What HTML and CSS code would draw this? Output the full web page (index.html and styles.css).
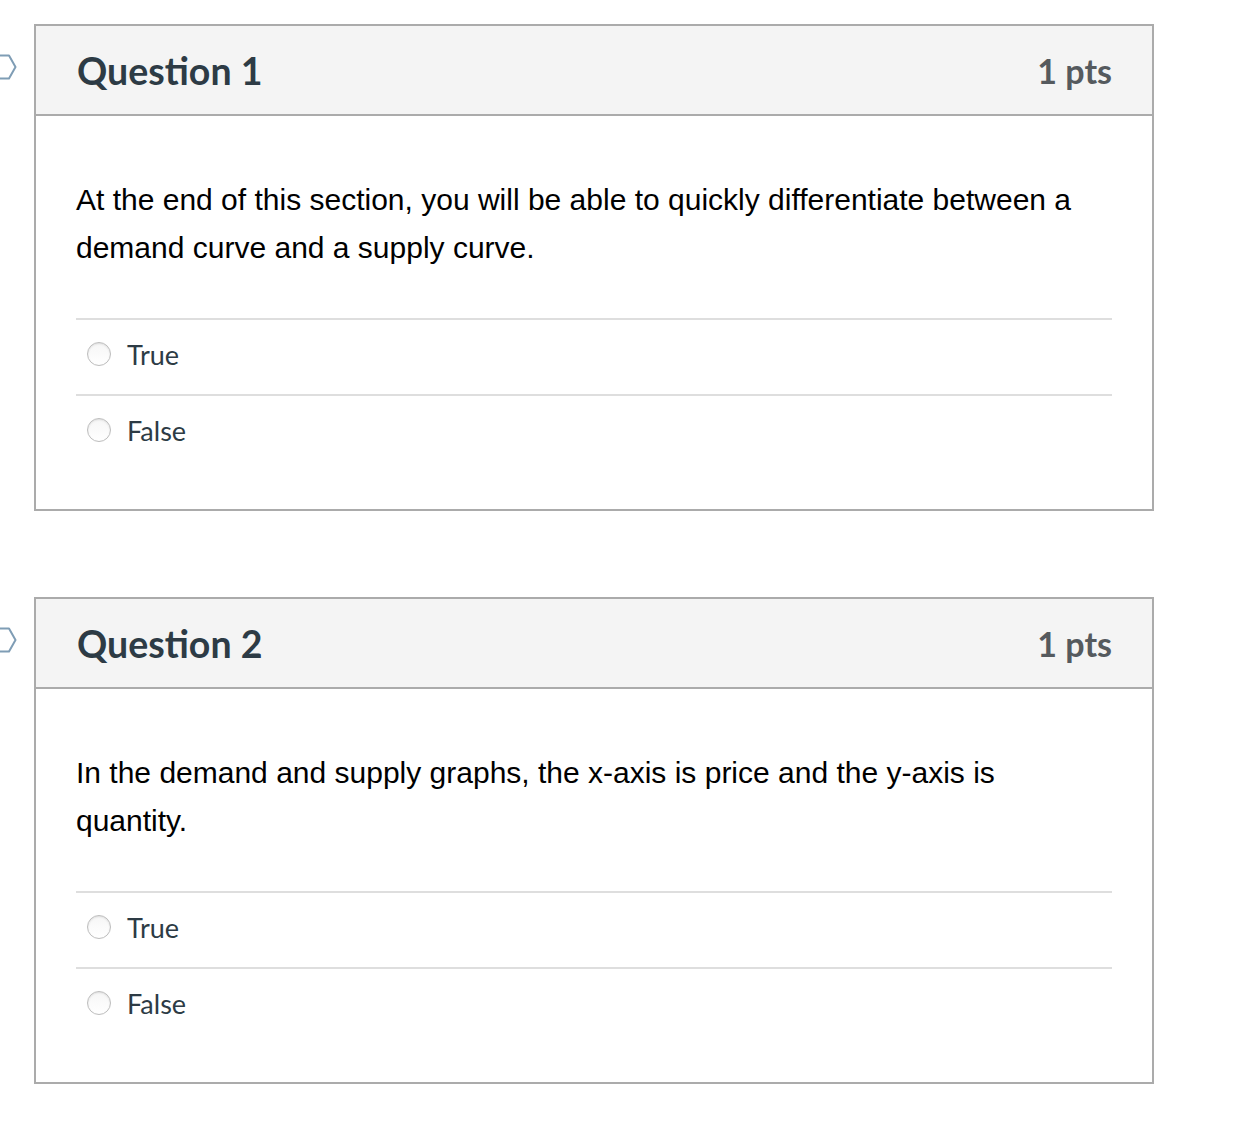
FILE: index.html
```html
<!DOCTYPE html>
<html>
<head>
<meta charset="utf-8">
<link rel="stylesheet" href="styles.css">
</head>
<body>
<div class="page">
  <div class="question">
    <svg class="flag" width="20" height="28" viewBox="0 0 20 28"><path d="M-6 1.5 H9 L15.5 13 L9 24.5 H-6" fill="none" stroke="#7f9db5" stroke-width="2" stroke-linejoin="round"/></svg>
    <div class="card">
      <div class="card-head">
        <span class="q-title">Question 1</span>
        <span class="q-pts">1 pts</span>
      </div>
      <div class="card-body">
        <p class="q-text">At the end of this section, you will be able to quickly differentiate between a demand curve and a supply curve.</p>
        <div class="answers">
          <div class="answer"><span class="radio"></span><span class="label">True</span></div>
          <div class="answer"><span class="radio"></span><span class="label">False</span></div>
        </div>
      </div>
    </div>
  </div>
  <div class="question">
    <svg class="flag" width="20" height="28" viewBox="0 0 20 28"><path d="M-6 1.5 H9 L15.5 13 L9 24.5 H-6" fill="none" stroke="#7f9db5" stroke-width="2" stroke-linejoin="round"/></svg>
    <div class="card">
      <div class="card-head">
        <span class="q-title">Question 2</span>
        <span class="q-pts">1 pts</span>
      </div>
      <div class="card-body">
        <p class="q-text">In the demand and supply graphs, the x-axis is price and the y-axis is quantity.</p>
        <div class="answers">
          <div class="answer"><span class="radio"></span><span class="label">True</span></div>
          <div class="answer"><span class="radio"></span><span class="label">False</span></div>
        </div>
      </div>
    </div>
  </div>
</div>
</body>
</html>
```

FILE: styles.css
```css
html, body {
  margin: 0;
  padding: 0;
  background: #fff;
}
.page {
  padding: 24px 0 0 34px;
  display: flex;
  flex-direction: column;
  gap: 86px;
}
.question {
  position: relative;
  width: 1120px;
}
.flag {
  position: absolute;
  left: -34px;
  top: 30px;
}
.card {
  border: 2px solid #ababab;
  background: #fff;
}
.card-head {
  background: #f4f4f4;
  border-bottom: 2px solid #ababab;
  height: 88px;
  display: flex;
  align-items: center;
  justify-content: space-between;
  padding: 0 40px 0 41px;
  font-family: Lato, "Open Sans", sans-serif;
  font-weight: bold;
}
.q-title {
  font-size: 37.5px;
  color: #2d3b45;
}
.q-pts {
  font-size: 34px;
  color: #555a5e;
}
.card-body {
  padding: 60px 40px 39px 40px;
}
.q-text {
  margin: 0 0 46px 0;
  font-family: "Liberation Sans", Arial, sans-serif;
  font-size: 30px;
  line-height: 48px;
  color: #000;
}
.answers {
  display: flex;
  flex-direction: column;
}
.answer {
  border-top: 2px solid #dedede;
  height: 74px;
  box-sizing: content-box;
  display: flex;
  align-items: center;
  padding: 0 0 0 10px;
  gap: 16px;
}
.answer > * {
  margin-top: -6px;
}
.radio {
  width: 22px;
  height: 22px;
  border-radius: 50%;
  border: 1px solid #bdbdbd;
  background: linear-gradient(#f6f6f6, #fff);
  box-shadow: inset 0 1px 2px rgba(0,0,0,0.1);
  margin-left: 1px;
}
.label {
  font-family: Lato, "Open Sans", sans-serif;
  font-size: 27px;
  color: #2d3b45;
}
```
